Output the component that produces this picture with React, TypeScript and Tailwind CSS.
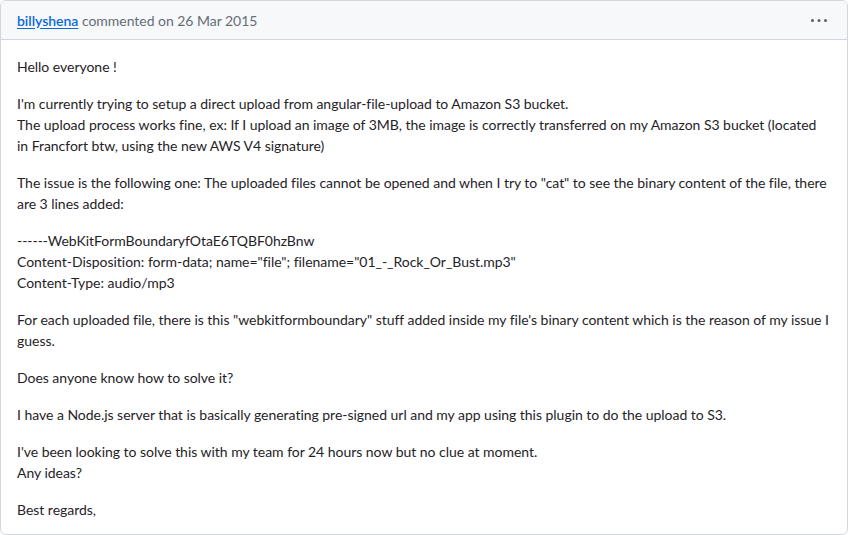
import React from "react";

const paragraphs: string[][] = [
  ["Hello everyone !"],
  [
    "I'm currently trying to setup a direct upload from angular-file-upload to Amazon S3 bucket.",
    "The upload process works fine, ex: If I upload an image of 3MB, the image is correctly transferred on my Amazon S3 bucket (located",
    "in Francfort btw, using the new AWS V4 signature)",
  ],
  [
    "The issue is the following one: The uploaded files cannot be opened and when I try to \"cat\" to see the binary content of the file, there",
    "are 3 lines added:",
  ],
  [
    "------WebKitFormBoundaryfOtaE6TQBF0hzBnw",
    "Content-Disposition: form-data; name=\"file\"; filename=\"01_-_Rock_Or_Bust.mp3\"",
    "Content-Type: audio/mp3",
  ],
  [
    "For each uploaded file, there is this \"webkitformboundary\" stuff added inside my file's binary content which is the reason of my issue I",
    "guess.",
  ],
  ["Does anyone know how to solve it?"],
  [
    "I have a Node.js server that is basically generating pre-signed url and my app using this plugin to do the upload to S3.",
  ],
  [
    "I've been looking to solve this with my team for 24 hours now but no clue at moment.",
    "Any ideas?",
  ],
  ["Best regards,"],
];

export default function App() {
  return (
    <div className="w-[848px] h-[535px] bg-white font-['Lato','Liberation_Sans',sans-serif] text-[14px] leading-[21px] tracking-[-0.03px] text-[#1f2328]">
      <div className="w-full h-full rounded-md border border-[#d0d7de] overflow-hidden flex flex-col">
        <div className="h-[39px] shrink-0 bg-[#f6f8fa] border-b border-[#d0d7de] flex items-center pl-4 pr-5">
          <div className="flex-1 text-[#656d76]">
            <a className="font-semibold text-[#0969da] underline underline-offset-2">billyshena</a>
            <span> commented on 26 Mar 2015</span>
          </div>
          <svg width="16" height="16" viewBox="0 0 16 16" className="fill-[#57606a] translate-y-[1px]">
            <path d="M8 9a1.5 1.5 0 100-3 1.5 1.5 0 000 3zM1.5 9a1.5 1.5 0 100-3 1.5 1.5 0 000 3zm13 0a1.5 1.5 0 100-3 1.5 1.5 0 000 3z" />
          </svg>
        </div>
        <div className="flex flex-col gap-4 p-4">
          {paragraphs.map((lines, i) => (
            <p key={i} className="whitespace-nowrap">
              {lines.map((l, j) => (
                <React.Fragment key={j}>
                  {j > 0 && <br />}
                  {l}
                </React.Fragment>
              ))}
            </p>
          ))}
        </div>
      </div>
    </div>
  );
}
